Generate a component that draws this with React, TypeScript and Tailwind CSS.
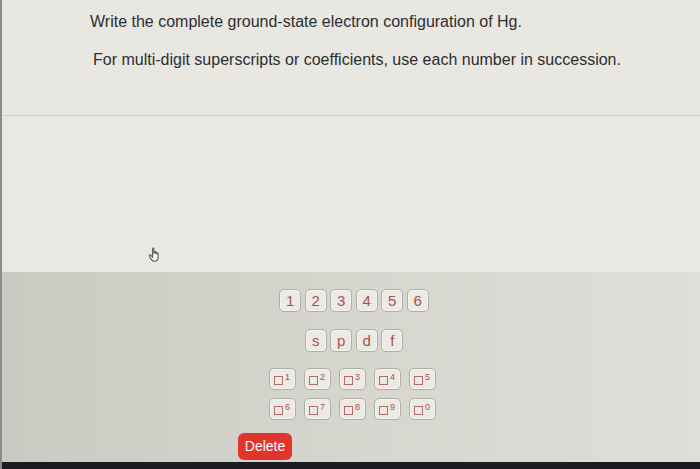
import React from "react";

const digits = ["1", "2", "3", "4", "5", "6"];
const orbitals = ["s", "p", "d", "f"];
const sup1 = ["1", "2", "3", "4", "5"];
const sup2 = ["6", "7", "8", "9", "0"];

function Key({ label }: { label: string }) {
  return (
    <div className="w-[22px] h-[23px] rounded-[5px] border border-[#aeada6] bg-[#eceae5] flex items-center justify-center text-[15px] text-[#a9524b] leading-none shadow-[inset_0_0_0_1px_#f4f3ef]">
      {label}
    </div>
  );
}

function SupKey({ label }: { label: string }) {
  return (
    <div className="w-[27px] h-[22px] rounded-[5px] border border-[#aeada6] bg-[#eceae5] flex items-center justify-center shadow-[inset_0_0_0_1px_#f4f3ef]">
      <div className="flex items-start">
        <div className="w-[9px] h-[9px] border border-[#b56a64] mt-[3px]" />
        <span className="text-[9px] leading-none text-[#a9524b] ml-[2px]">{label}</span>
      </div>
    </div>
  );
}

export default function App() {
  return (
    <div
      className="w-[700px] h-[469px] overflow-hidden flex flex-col bg-[#e8e6e1] border-l-2 border-[#8d8c88]"
      style={{ fontFamily: '"Liberation Sans", Arial, sans-serif' }}
    >
      <div className="h-[116px] shrink-0 bg-[#e9e7e2] border-b border-[#d3d1cb] pl-[88px] pt-[10px] text-[#2e2e2e]">
        <div className="text-[16px]">Write the complete ground-state electron configuration of Hg.</div>
        <div className="text-[16px] mt-[14px] pl-[3px]">
          For multi-digit superscripts or coefficients, use each number in succession.
        </div>
      </div>
      <div className="h-[156px] shrink-0 bg-[#eae8e3] relative">
        <svg className="absolute left-[146px] top-[131px]" width="16" height="16" viewBox="0 0 14 14">
          <path
            d="M4 1.5 C4 0.8 5.2 0.8 5.2 1.5 V6 M5.2 4.5 C5.2 3.8 6.4 3.8 6.4 4.5 V6 M6.4 5 C6.4 4.3 7.6 4.3 7.6 5 V6.3 M7.6 5.6 C7.6 4.9 8.8 4.9 8.8 5.6 V9 C8.8 11 7.6 12.5 5.8 12.5 C4 12.5 3 11.5 2.2 9.8 L1.3 7.8 C1 7.1 1.9 6.6 2.4 7.2 L4 8.8 V1.5"
            fill="#f4f3ef"
            stroke="#5f5e5a"
            strokeWidth="1"
          />
        </svg>
      </div>
      <div className="flex-1 bg-gradient-to-r from-[#cbcac2] via-[#d6d5ce] to-[#dfded8] flex flex-col pt-[17px]">
        <div className="flex justify-center gap-[3.5px] pl-[6px]">
          {digits.map((d) => (
            <Key key={d} label={d} />
          ))}
        </div>
        <div className="flex justify-center gap-[3.5px] pl-[6px] mt-[17px]">
          {orbitals.map((d) => (
            <Key key={d} label={d} />
          ))}
        </div>
        <div className="flex justify-center gap-[8px] pl-[2px] mt-[16px]">
          {sup1.map((d) => (
            <SupKey key={d} label={d} />
          ))}
        </div>
        <div className="flex justify-center gap-[8px] pl-[2px] mt-[8px]">
          {sup2.map((d) => (
            <SupKey key={d} label={d} />
          ))}
        </div>
        <div className="pl-[236px] mt-[13px]">
          <div className="w-[54px] h-[27px] rounded-[6px] bg-[#e0352c] text-white text-[14px] flex items-center justify-center">
            Delete
          </div>
        </div>
      </div>
      <div className="h-[7px] shrink-0 bg-[#1c1c22]" />
    </div>
  );
}
